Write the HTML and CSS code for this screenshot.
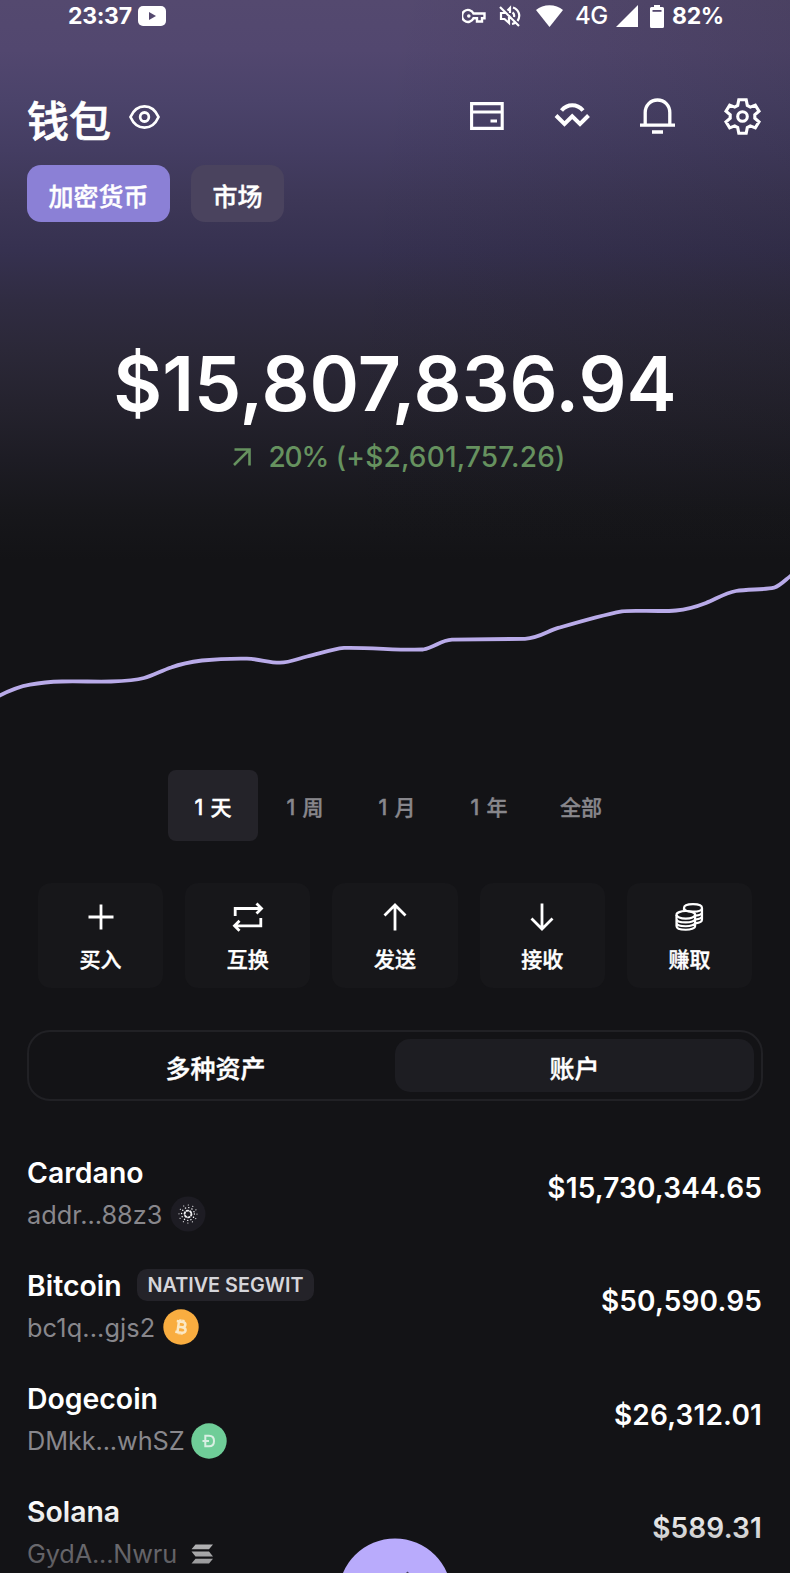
FILE: index.html
```html
<!DOCTYPE html>
<html lang="zh-CN">
<head>
<meta charset="utf-8">
<title>钱包</title>
<link rel="stylesheet" href="styles.css">
</head>
<body>
<main class="screen">
  <div class="status">
    <div class="status-left">
      <span class="clock">23:37</span>
      <svg class="yt" width="28" height="20" viewBox="0 0 28 20"><rect width="28" height="20" rx="5" fill="#fff"/><path d="M11 6l7 4-7 4z" fill="#54486e"/></svg>
    </div>
    <div class="status-right">
      <svg class="key" width="24" height="16" viewBox="0 0 24 16" fill="none" stroke="#fff" stroke-width="2.4"><path d="M11.5 5.5A6 6 0 1 0 11.5 10.3H15V13.5H20V10.3H22.5V5.5Z"/><circle cx="6.8" cy="8" r="1.8" fill="#fff" stroke="none"/></svg>
      <svg class="mute" width="22" height="22" viewBox="0 0 22 22" fill="none" stroke="#fff" stroke-width="2.200"><path d="M1 2L20 21M10 10V18L5.5 14H2V8H6M8.500 5.500L11 3V8M13.500 7.500C15 8.500 15.500 10 15 12M14 2.500C20 4.500 22 11 18.500 16M13 19C14.500 18.700 15.500 18.200 16.500 17.500"/></svg>
      <svg class="wifi" width="27" height="22" viewBox="0 0 27 22"><path d="M0 5C7-1.300 20-1.300 27 5L13.500 22z" fill="#fff"/></svg>
      <span class="net">4G</span>
      <svg class="signal" width="22" height="22" viewBox="0 0 22 22"><path d="M22 0V22H0z" fill="#fff"/></svg>
      <svg class="battery" width="14" height="23" viewBox="0 0 14 23"><path d="M4 0h6v2h2.500Q14 2 14 3.500V21.500Q14 23 12.500 23h-11Q0 23 0 21.500v-18Q0 2 1.500 2H4z" fill="#fff"/><path d="M2.500 5h9v1.800h-9z" fill="#54486e"/></svg>
      <span class="percent">82%</span>
    </div>
  </div>

  <header class="header">
    <h1 class="title">钱包</h1>
    <svg class="eye" width="31" height="26" viewBox="0 0 32 26" preserveAspectRatio="none" fill="none" stroke="#fff" stroke-width="2.800"><path d="M1.500 13C8-1.200 24-1.200 30.500 13C24 27.200 8 27.200 1.500 13Z" stroke-linejoin="round"/><circle cx="16" cy="13" r="4.500"/></svg>
    <nav class="tools">
      <svg width="40" height="40" viewBox="0 0 40 40" fill="none" stroke="#fff" stroke-width="3.100"><path d="M4.600 7.600H35.200V32.400H4.600zM4.600 16H35.200"/><path d="M23.500 25H30" stroke-width="3"/></svg>
      <svg width="40" height="40" viewBox="0 0 40 40" fill="none" stroke="#fff" stroke-width="4"><path d="M9.500 14.500C15.500 7.500 25 7.500 31 14.500" /><path d="M4 19.500L12.500 28L20.200 20.300L28 28L36.500 19.500"/></svg>
      <svg width="40" height="40" viewBox="0 0 40 40" fill="none" stroke="#fff" stroke-width="3.300"><path d="M8.200 29V16.500C8.200 9.500 13.500 4 20.500 4S32.800 9.500 32.800 16.500V29M3 29.200H38M15 36H26"/></svg>
      <svg width="40" height="40" viewBox="0 0 40 40" fill="none" stroke="#fff" stroke-width="3.100"><path d="M16.800 3.800H24.200L25.300 9.400L28.300 11.100L33.300 9.100L37 15.200L32.800 18.800V22.200L37 25.800L33.300 31.900L28.300 29.900L25.300 31.600L24.200 37.200H16.800L15.700 31.600L12.700 29.900L7.700 31.900L4 25.800L8.200 22.200V18.800L4 15.200L7.700 9.100L12.700 11.100L15.700 9.400Z"/><circle cx="20.500" cy="20.500" r="4.800"/></svg>
    </nav>
  </header>

  <div class="chips">
    <span class="chip chip-on">加密货币</span>
    <span class="chip">市场</span>
  </div>

  <section class="balance">
    <div class="total">$15,807,836.94</div>
    <div class="change">
      <svg width="18" height="18" viewBox="0 0 18 18" fill="none" stroke="#66925f" stroke-width="2.600"><path d="M1.500 1.500H16.500V17.500M16 2L1 17"/></svg>
      <span class="change-text"><span class="rate">20%</span> <span class="gain">(+$2,601,757.26)</span></span>
    </div>
  </section>

  <svg class="chart" width="790" height="150" viewBox="0 560 790 150" fill="none" stroke="#b9abe9" stroke-width="3.800"><path d="M-3 697C12 689 20 686.500 30 684.700C42 682.300 50 681.700 62 681.500C80 681 95 682 111 681.500C126 681 135 680.500 144 678C153 675.500 162 670.500 171 667.500C182 663.500 190 662 202 660.500C217 659 232 658.500 247 658.700C260 659 268 662.700 280 662.700C290 662.500 297 659 307 656.500C320 653.500 332 649 344 647.900C370 647.300 400 650.500 423 649.500C435 647.500 440 640.500 452 639.700L525 638.800C540 638 548 630.500 559 627.700C580 621.500 605 614.500 622 611.300C632 609.800 660 612 676 610.500C688 609.500 697 606.500 706 603C716 599 725 593 736 591C748 589 764 590 774 587.700C781 585.500 786 579 793 574"/></svg>

  <div class="periods">
    <span class="period period-on">1 天</span>
    <span class="period">1 周</span>
    <span class="period">1 月</span>
    <span class="period">1 年</span>
    <span class="period">全部</span>
  </div>

  <div class="actions">
    <div class="action"><svg width="32" height="32" viewBox="0 0 32 32"><path d="M16 3.500V28.500M3.500 16H28.500"/></svg><span>买入</span></div>
    <div class="action"><svg width="32" height="32" viewBox="0 0 32 32"><path d="M3.200 15V7.500H29M24.500 2.500L29.500 7.500L24.500 12.500M28.800 17V24.800H3M7.500 19.800L2.500 24.800L7.500 29.800"/></svg><span>互换</span></div>
    <div class="action"><svg width="32" height="32" viewBox="0 0 32 32"><path d="M16 29.500V4M5.500 14.500L16 4L26.500 14.500"/></svg><span>发送</span></div>
    <div class="action"><svg width="32" height="32" viewBox="0 0 32 32"><path d="M16 2.500V28M5.500 17.500L16 28L26.500 17.500"/></svg><span>接收</span></div>
    <div class="action"><svg class="coins" width="32" height="32" viewBox="0 0 32 32"><ellipse cx="12.800" cy="13.800" rx="9.300" ry="3.800"/><path d="M3.500 14V25C3.500 30 22.100 30 22.100 25V14M3.500 17.700C3.500 22.700 22.100 22.700 22.100 17.700M3.500 21.500C3.500 26.500 22.100 26.500 22.100 21.500"/><path d="M11 9.500V7C11 1.800 29 1.800 29 7V18.500C29 20.500 26 22 22.500 22.300M11 7C11 9 14 10.600 20 10.700C25 10.700 29 9.500 29 7M22.500 14.700C26 14.400 29 13 29 11M22.500 18.500C26 18.200 29 17 29 15"/></svg><span>赚取</span></div>
  </div>

  <div class="segment">
    <span class="seg">多种资产</span>
    <span class="seg seg-on">账户</span>
  </div>

  <section class="accounts">
    <article class="account">
      <div class="info">
        <div class="name-line"><span class="name n-ada">Cardano</span></div>
        <div class="addr-line"><span class="addr">addr...88z3</span>
          <svg class="coin" width="36" height="36" viewBox="0 0 36 36"><circle cx="18" cy="18" r="17.500" fill="#1d1c23"/><g fill="none" stroke="#f2f2f5" stroke-linecap="round"><circle cx="18" cy="18" r="3.400" stroke-width="1.900" stroke-dasharray="1.500 2.060"/><circle cx="18" cy="18" r="6.400" stroke-width="1.400" stroke-dasharray=".1 3.250"/><circle cx="18" cy="18" r="9" stroke-width="1.100" stroke-dasharray=".1 4.610"/></g></svg></div>
      </div>
      <div class="amount">$15,730,344.65</div>
    </article>
    <article class="account">
      <div class="info">
        <div class="name-line"><span class="name n-btc">Bitcoin</span><span class="badge"><span class="badge-text">NATIVE SEGWIT</span></span></div>
        <div class="addr-line"><span class="addr addr-btc">bc1q...gjs2</span>
          <svg class="coin" width="36" height="36" viewBox="0 0 36 36"><circle cx="18" cy="18" r="17.700" fill="#f9ad40"/><g transform="rotate(8 18 18)" fill="none" stroke="#fbe8c5" stroke-width="2.500"><path d="M13 12.700H19Q22 12.700 22 15.300T19 18H15M19 18Q23 18 23 20.700T19.500 23.500H13M15.200 12.700V23.500M16.500 10.500V13M19.500 10.500V13M16.500 23V25.500M19.500 23V25.500"/></g></svg></div>
      </div>
      <div class="amount">$50,590.95</div>
    </article>
    <article class="account">
      <div class="info">
        <div class="name-line"><span class="name n-doge">Dogecoin</span></div>
        <div class="addr-line"><span class="addr addr-doge">DMkk...whSZ</span>
          <svg class="coin" width="36" height="36" viewBox="0 0 36 36"><circle cx="18" cy="18" r="17.700" fill="#6fcd98"/><path d="M14.300 12.700H18Q23 12.700 23 18T18 23.300H14.300ZM11.500 18H18" fill="none" stroke="#d9efe3" stroke-width="2"/></svg></div>
      </div>
      <div class="amount">$26,312.01</div>
    </article>
    <article class="account">
      <div class="info">
        <div class="name-line"><span class="name n-sol">Solana</span></div>
        <div class="addr-line"><span class="addr addr-sol">GydA...Nwru</span>
          <svg class="coin coin-sol" width="36" height="36" viewBox="0 0 36 36" fill="#fff"><path d="M11.500 8.500H29L25 13.300H7.500zM7.500 15.600H25L29 20.400H11.500zM11.500 22.700H29L25 27.500H7.500z"/></svg></div>
      </div>
      <div class="amount">$589.31</div>
    </article>
  </section>
  <div class="fade"></div>
  <svg class="fab" width="116" height="35" viewBox="0 0 116 35"><circle cx="58" cy="57" r="56.500" fill="#b9abfc"/><path d="M69 35L70.500 33.500L72 35z" fill="#45405c"/></svg>
</main>
</body>
</html>
```
FILE: styles.css
```css
* { box-sizing: border-box; }
body {
  margin: 0;
  background: #131316;
  color: #fff;
  font-family: Inter, "Noto Sans CJK SC", sans-serif;
}
svg { display: block; flex: none; }
.screen {
  position: relative;
  width: 790px;
  height: 1573px;
  overflow: hidden;
  display: flex;
  flex-direction: column;
  background:
    linear-gradient(100deg, rgba(19,19,22,0) 45%, rgba(19,19,22,.18) 100%) 0 0 / 100% 540px no-repeat,
    linear-gradient(180deg, #54496f 0, #52476f 50px, #4b436a 100px, #443d62 150px, #3d3757 200px, #363150 250px, #302c42 300px, #2b2838 350px, #24222d 410px, #1d1c24 460px, #17171b 510px, #131316 560px);
}
.screen > * { flex: none; }

.status { height: 32px; display: flex; justify-content: space-between; padding: 0 68px 0 67px; font-size: 23px; line-height: 32px; }
.status-left, .status-right { display: flex; align-items: center; }
.clock { width: 70px; margin-left: 1px; font-weight: 700; letter-spacing: -.3px; }
.key { margin-right: 13px; }
.mute { margin-right: 15px; }
.wifi { margin-right: 12px; }
.net { width: 41px; font-size: 24px; font-weight: 500; letter-spacing: -.5px; }
.signal { margin-right: 12px; }
.battery { margin-right: 8px; }
.percent { width: 50px; font-weight: 700; letter-spacing: -.3px; white-space: nowrap; }

.header { height: 133px; padding: 52px 28px 0 27px; display: flex; align-items: flex-start; }
.title { margin: 7px 0 0; width: 102px; font-size: 42px; line-height: 62px; font-weight: 500; -webkit-text-stroke: .7px #fff; }
.eye { margin-top: 20px; }
.tools { display: flex; gap: 45px; margin: 12px 0 0 auto; }

.chips { display: flex; gap: 21px; height: 57px; padding: 0 0 0 27px; }
.chip { padding: 0 21.500px; border-radius: 14px; background: #4a435e; font-size: 25px; line-height: 64px; height: 57px; font-weight: 500; -webkit-text-stroke: .4px #fff; }
.chip-on { background: #8b80d6; }

.balance { padding-top: 112px; height: 338px; display: flex; flex-direction: column; align-items: center; }
.total { font-size: 75.200px; line-height: 100px; font-weight: 600; white-space: nowrap; }
.change { display: flex; align-items: center; gap: 17px; height: 45px; margin-left: 9px; color: #66925f; font-size: 28px; font-weight: 500; }
.change-text { white-space: nowrap; }
.rate { letter-spacing: -1.100px; }
.gain { letter-spacing: .2px; }

.chart { margin-bottom: 60px; }

.periods { display: flex; gap: 2px; padding-left: 168px; height: 71px; }
.period { width: 90px; border-radius: 8px; text-align: center; font-size: 21px; line-height: 75px; font-weight: 500; color: #88878c; word-spacing: 1.500px; -webkit-text-stroke: .4px currentColor; }
.period-on { background: #242329; color: #fff; }

.actions { margin-top: 42px; padding: 0 38px; display: flex; gap: 22px; height: 105px; }
.action { flex: 1; display: flex; flex-direction: column; align-items: center; padding-top: 18px; border-radius: 13px; background: #17171a; font-size: 21px; line-height: 30px; font-weight: 500; -webkit-text-stroke: .4px #fff; }
.action svg { fill: none; stroke: #fff; stroke-width: 2.800; margin-bottom: 12px; }
.action .coins { stroke-width: 2.200; }

.segment { margin: 42px 27px 0; height: 71px; border: 2px solid #212125; border-radius: 23px; display: flex; padding: 7px; }
.seg { flex: 1; border-radius: 15px; text-align: center; font-size: 25px; line-height: 60px; font-weight: 500; -webkit-text-stroke: .4px #fff; }
.seg-on { background: #1d1d22; }

.accounts { padding: 50px 28px 0 27px; }
.account { display: flex; justify-content: space-between; height: 113.300px; }
.name-line { display: flex; align-items: center; height: 42px; }
.addr-line { display: flex; align-items: center; height: 42px; gap: 8px; }
.name { font-size: 28.400px; font-weight: 600; }
.addr { font-size: 25.300px; color: #88878c; }
.addr-btc { letter-spacing: .1px; }
.addr-doge { letter-spacing: -.1px; margin-right: -1px; }
.addr-sol { letter-spacing: -.15px; margin-right: -1.500px; }
.badge { margin-left: 15px; height: 32px; padding: 0 11px; border-radius: 10px; background: #242329; color: #d6d5da; font-size: 19.800px; line-height: 32px; font-weight: 600; }
.amount { margin-top: 16px; height: 42px; line-height: 42px; font-size: 28px; letter-spacing: .15px; font-weight: 600; }
.coin-sol { opacity: .9; }
.fade { position: absolute; left: 0; right: 0; bottom: 0; height: 70px; background: linear-gradient(180deg, rgba(19,19,22,0), rgba(19,19,22,.42)); }
.fab { position: absolute; left: 337px; bottom: 0; }
```
